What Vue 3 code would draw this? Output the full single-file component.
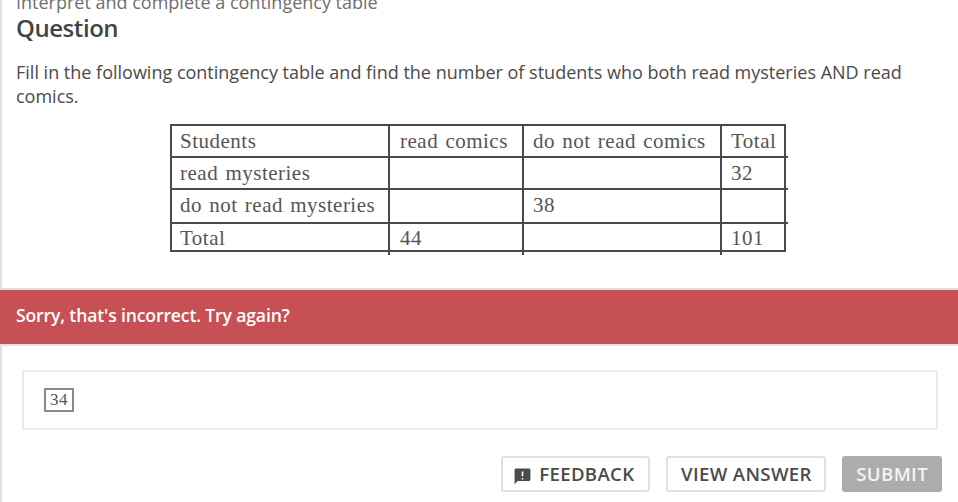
<script setup>
const rows = [
  ['Students', 'read comics', 'do not read comics', 'Total'],
  ['read mysteries', '', '', '32'],
  ['do not read mysteries', '', '38', ''],
  ['Total', '44', '', '101'],
]
</script>

<template>
  <div class="page">
    <section class="question">
      <div class="crumb">Interpret and complete a contingency table</div>
      <h2 class="title">Question</h2>
      <p class="prompt">Fill in the following contingency table and find the number of students who both read mysteries AND read comics.</p>
      <div class="table-wrap">
        <div class="table">
          <template v-for="(row, r) in rows" :key="r">
            <div v-for="(cell, c) in row" :key="c" class="cell" :class="['r' + r, 'c' + c]">{{ cell }}</div>
          </template>
        </div>
      </div>
    </section>
    <div class="banner">Sorry, that's incorrect. Try again?</div>
    <section class="answer">
      <div class="answer-box"><span class="boxed">34</span></div>
      <div class="actions">
        <button class="btn feedback">
          <svg class="icon" viewBox="0 0 24 24" width="19" height="19"><path fill="#4a4a4a" d="M20 3H4c-1.1 0-2 .9-2 2v18l4-4h14c1.1 0 2-.9 2-2V5c0-1.1-.9-2-2-2zm-7 10h-2V7h2v6zm0 4h-2v-2h2v2z"/></svg>
          FEEDBACK
        </button>
        <button class="btn view">VIEW ANSWER</button>
        <button class="btn submit">SUBMIT</button>
      </div>
    </section>
  </div>
</template>

<style>
html, body { margin: 0; background: #fff; }
</style>

<style scoped>
.page {
  width: 958px;
  height: 502px;
  overflow: hidden;
  font-family: "Open Sans", sans-serif;
  color: #4a4a4a;
  display: flex;
  flex-direction: column;
  background: #fff;
}
.question {
  height: 288px;
  box-sizing: border-box;
  border-left: 2px solid #e0e0e0;
  padding: 0 16px 0 14px;
  flex: none;
  overflow: hidden;
}
.crumb {
  font-size: 18px;
  line-height: 20px;
  margin-top: -8px;
  color: #6f6f6f;
}
.title {
  margin: 0;
  font-size: 24px;
  font-weight: 600;
  line-height: 32px;
  letter-spacing: -0.45px;
  color: #444;
}
.prompt {
  margin: 16px 0 0;
  font-size: 18px;
  line-height: 24px;
  width: 905px;
}
.table-wrap {
  margin-top: 16px;
  margin-left: 154px;
}
.table {
  display: grid;
  grid-template-columns: 218px 134px 198px 64px;
  grid-template-rows: 32px 32px 34px 26px;
  width: 616px;
  box-sizing: border-box;
  border-left: 2px solid #4a4a4a;
  border-top: 2px solid #4a4a4a;
  border-bottom: 2px solid #4a4a4a;
  font-family: "Liberation Serif", serif;
  font-size: 21px;
  letter-spacing: 0.5px;
  word-spacing: 1.5px;
  color: #555;
  position: relative;
}
.cell {
  box-sizing: border-box;
  padding: 3px 0 0 8px;
  line-height: 24px;
  border-right: 2px solid #4a4a4a;
  border-bottom: 2px solid #4a4a4a;
  position: relative;
  white-space: nowrap;
}
.c1 { padding-left: 10px; }
.c2 { padding-left: 9px; }
.c3 { padding-left: 9px; }
.r3 { border-bottom: 0; padding-top: 2px; }
.r3:not(.c3)::after {
  content: "";
  position: absolute;
  right: -2px;
  top: 100%;
  width: 2px;
  height: 5px;
  background: #4a4a4a;
}
.c3:not(.r3)::after {
  content: "";
  position: absolute;
  left: calc(100% + 2px);
  bottom: -2px;
  width: 2px;
  height: 2px;
  background: #4a4a4a;
}
.banner {
  flex: none;
  box-sizing: border-box;
  height: 58px;
  border-top: 2px solid #e0e0e0;
  border-bottom: 2px solid #e0e0e0;
  background: #c75054;
  color: #fff;
  font-size: 17.6px;
  font-weight: 600;
  letter-spacing: -0.15px;
  padding: 0 0 4px 16px;
  display: flex;
  align-items: center;
}
.answer {
  flex: 1;
  border-left: 2px solid #e0e0e0;
  padding: 24px 20px 0 20px;
  display: flex;
  flex-direction: column;
}
.answer-box {
  height: 60px;
  box-sizing: border-box;
  border: 2px solid #ebebeb;
  border-radius: 2px;
  padding: 16px 0 0 20px;
  width: 916px;
}
.boxed {
  display: inline-block;
  box-sizing: border-box;
  width: 30px;
  height: 24px;
  border: 2px solid #888;
  border-radius: 1px;
  font-family: "Liberation Serif", serif;
  font-size: 17px;
  line-height: 20px;
  letter-spacing: 0.5px;
  text-align: center;
  color: #555;
}
.actions {
  display: flex;
  justify-content: flex-end;
  gap: 16px;
  margin-top: 26px;
  width: 920px;
}
.btn {
  height: 36px;
  box-sizing: border-box;
  border: 2px solid #e0e0e0;
  border-radius: 3px;
  background: #fff;
  color: #4a4a4a;
  font-family: "Open Sans", sans-serif;
  font-size: 18.6px;
  font-weight: 600;
  letter-spacing: 0.35px;
  padding: 0 13px 2px;
  display: flex;
  align-items: center;
  gap: 7px;
}
.feedback { padding-left: 10.5px; padding-right: 14px; }
.view { padding-left: 12.5px; padding-right: 12.5px; }
.submit {
  background: #acacac;
  border-color: #acacac;
  color: #f4f4f4;
  padding: 0 12px 2px;
}
.icon { flex: none; margin-top: 5px; }
</style>
